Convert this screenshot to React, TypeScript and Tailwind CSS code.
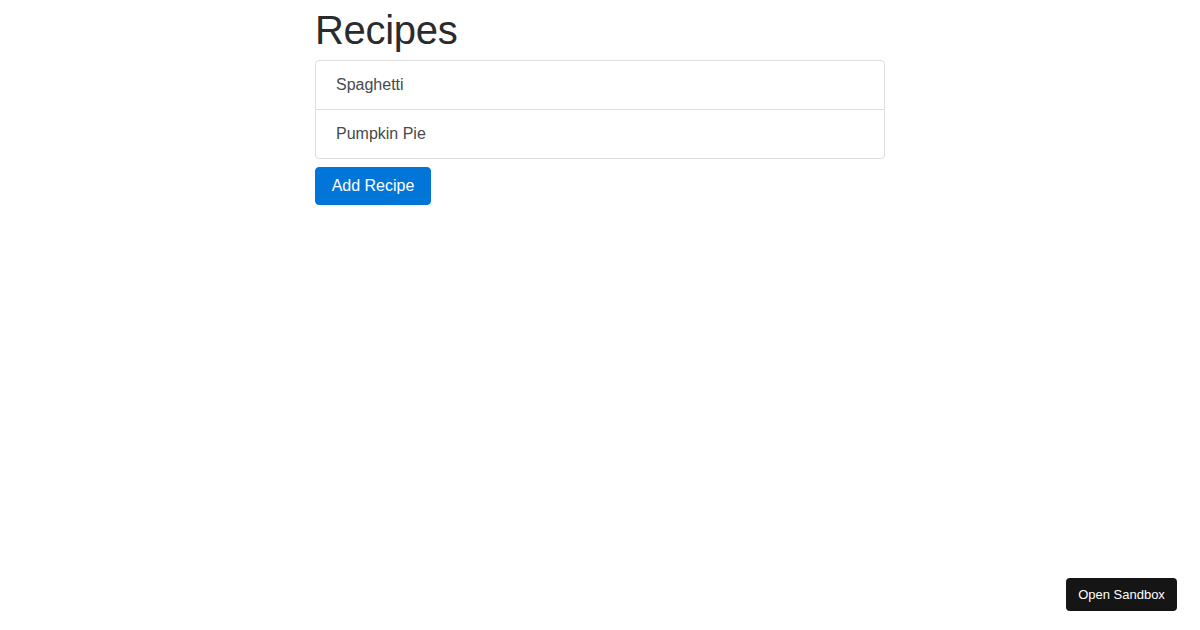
import React from "react";

export default function App() {
  const items = ["Spaghetti", "Pumpkin Pie"];
  return (
    <div className="min-h-[630px] w-full bg-white relative" style={{ fontFamily: '"Liberation Sans", Arial, sans-serif' }}>
      <div className="mx-auto w-[570px] pt-[6px]">
        <h1 className="text-[40px] leading-[48px] tracking-[-0.3px] text-[#292b2c] mb-[6px]">Recipes</h1>
        <div className="border border-[#dfdfdf] rounded-[4px] flex flex-col">
          {items.map((it, i) => (
            <div
              key={it}
              className={`px-[20px] py-[12px] text-[16px] leading-[24px] text-[#464a4c] ${i > 0 ? "border-t border-[#dfdfdf]" : ""}`}
            >
              {it}
            </div>
          ))}
        </div>
        <button className="mt-[8px] w-[116px] bg-[#0275d8] border border-[#0275d8] text-white text-[16px] leading-[20px] py-[8px] rounded-[4px] text-center">
          Add Recipe
        </button>
      </div>
      <div className="absolute right-[23px] bottom-[19px] w-[111px] h-[33px] flex items-center justify-center bg-[#151515] text-white text-[13px] rounded-[4px]">
        Open Sandbox
      </div>
    </div>
  );
}
